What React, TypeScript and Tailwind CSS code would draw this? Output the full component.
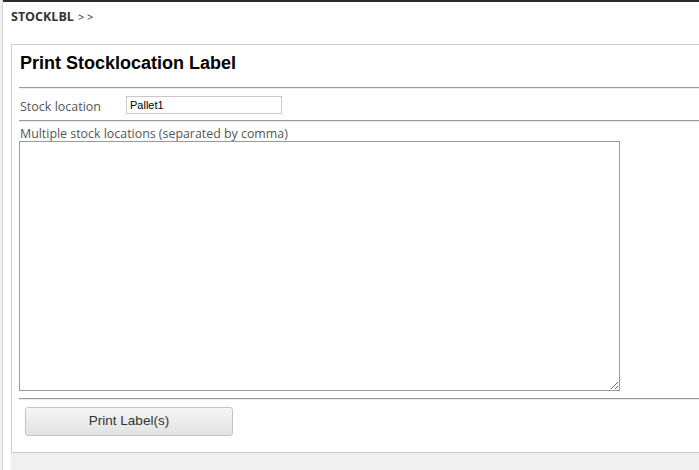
export default function App() {
    return (
        <div className="flex h-[470px] w-[699px] overflow-hidden bg-white">
            {/* left strip */}
            <div className="h-full w-[3px] border-r border-[#d6d6d6] bg-[#f0f0f0]" />

            <div className="flex min-w-0 flex-1 flex-col border-t-2 border-[#2b2b2b]">
                {/* breadcrumb */}
                <div className="flex h-[30px] items-center pl-[8px] pt-px text-[12.5px] text-[#333] [font-family:'Open_Sans',sans-serif]">
                    <span className="font-bold">STOCKLBL</span>
                    <span className="ml-[4px] text-[11px]">&gt; &gt;</span>
                </div>

                <div className="ml-[8px] mt-[12px] flex flex-1 flex-col">
                    {/* panel */}
                    <div className="flex h-[409px] flex-col border-b border-l border-t border-[#cccccc] pl-[7px] [font-family:'Liberation_Sans',Arial,sans-serif]">
                        <h1 className="mt-[2px] h-[32px] pl-px text-[18px] font-bold leading-[32px] text-black">
                            Print Stocklocation Label
                        </h1>

                        <Separator className="mt-[8px]" />

                        <div className="flex h-[31px] items-center">
                            <label className="w-[107px] pl-px pt-[5px] text-[12.5px] text-[#555] [font-family:'Open_Sans',sans-serif]">
                                Stock location
                            </label>
                            <input
                                defaultValue="Pallet1"
                                className="h-[18px] w-[156px] border border-[#c8c8c8] px-[3px] text-[11px] text-black outline-none"
                            />
                        </div>

                        <Separator />

                        <label className="h-[19px] pl-px text-[12.4px] leading-[24px] text-[#555] [font-family:'Open_Sans',sans-serif]">
                            Multiple stock locations (separated by comma)
                        </label>
                        <textarea className="h-[250px] w-[601px] shrink-0 resize border border-[#999] bg-white outline-none" />

                        <Separator className="mt-[7px]" />

                        <div className="pl-[6px] pt-[7px]">
                            <button className="h-[29px] w-[208px] rounded-[3px] border border-[#c4c4c4] bg-gradient-to-b from-[#f6f6f6] to-[#e2e2e2] text-[13.5px] text-[#333]">
                                Print Label(s)
                            </button>
                        </div>
                    </div>
                    <div className="flex-1 bg-[#f0f0f0]" />
                </div>
            </div>
        </div>
    )
}

function Separator({ className = "" }: { className?: string }) {
    return (
        <div className={"flex shrink-0 flex-col " + className}>
            <div className="h-px bg-[#9a9a9a]" />
            <div className="h-px bg-[#ececec]" />
        </div>
    )
}
